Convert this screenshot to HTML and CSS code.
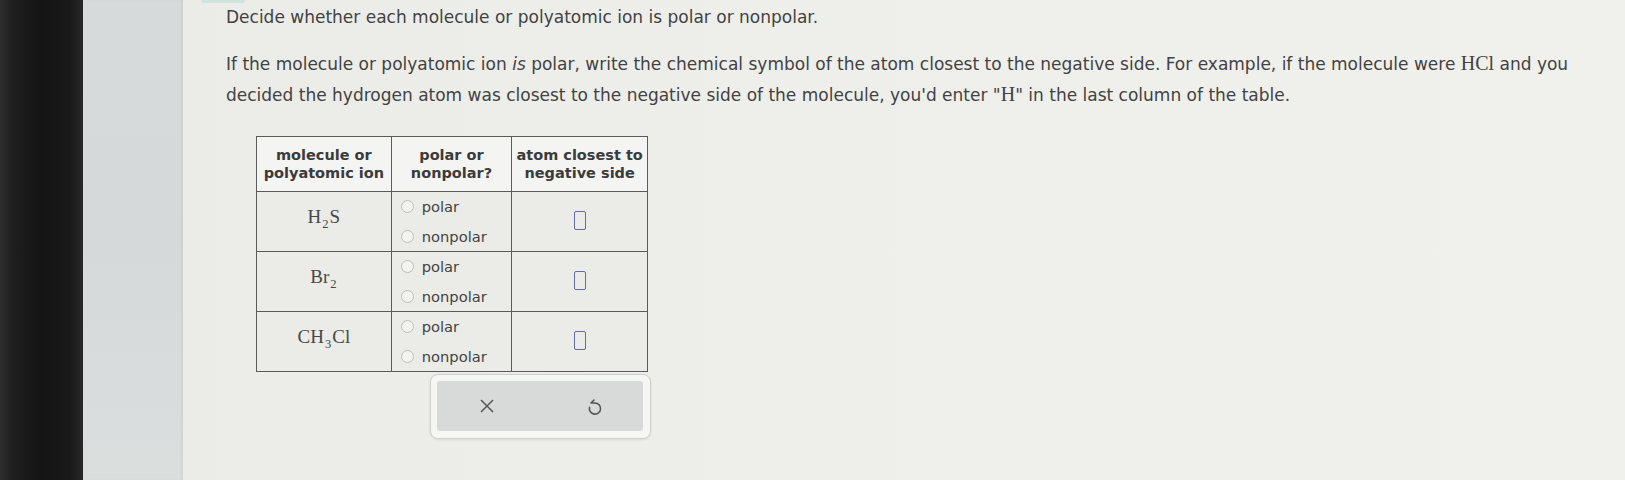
FILE: index.html
```html
<!DOCTYPE html>
<html>
<head>
<meta charset="utf-8">
<link rel="stylesheet" href="styles.css">
</head>
<body>
<div class="screen">
  <div class="bezel"></div>
  <div class="sidebar"></div>
  <div class="main">
    <div class="tab-hint"></div>
    <p class="intro">Decide whether each molecule or polyatomic ion is polar or nonpolar.</p>
    <p class="para">If the molecule or polyatomic ion <i>is</i> polar, write the chemical symbol of the atom closest to the negative side. For example, if the molecule were <span class="chem">HCl</span> and you<br>decided the hydrogen atom was closest to the negative side of the molecule, you'd enter "<span class="chem">H</span>" in the last column of the table.</p>
    <div class="work">
      <table class="grid">
        <thead>
          <tr>
            <th class="c1">molecule or<br>polyatomic ion</th>
            <th class="c2">polar or<br>nonpolar?</th>
            <th class="c3">atom closest to<br>negative side</th>
          </tr>
        </thead>
        <tbody>
          <tr>
            <td class="formula">H<sub>2</sub>S</td>
            <td class="choices">
              <label class="opt"><span class="radio"></span>polar</label>
              <label class="opt"><span class="radio"></span>nonpolar</label>
            </td>
            <td class="answer"><span class="box"></span></td>
          </tr>
          <tr>
            <td class="formula">Br<sub>2</sub></td>
            <td class="choices">
              <label class="opt"><span class="radio"></span>polar</label>
              <label class="opt"><span class="radio"></span>nonpolar</label>
            </td>
            <td class="answer"><span class="box"></span></td>
          </tr>
          <tr>
            <td class="formula">CH<sub>3</sub>Cl</td>
            <td class="choices">
              <label class="opt"><span class="radio"></span>polar</label>
              <label class="opt"><span class="radio"></span>nonpolar</label>
            </td>
            <td class="answer"><span class="box"></span></td>
          </tr>
        </tbody>
      </table>
      <div class="actions">
        <div class="action-inner">
          <button class="act" aria-label="clear">
            <svg width="16" height="16" viewBox="0 0 16 16"><path d="M2 2 L14 14 M14 2 L2 14" stroke="#555" stroke-width="1.5" fill="none"/></svg>
          </button>
          <button class="act" aria-label="undo">
            <svg width="18" height="20" viewBox="0 0 18 20"><path d="M6 7 L9 4 M6 7 L10 7 A5.6 5.6 0 1 1 4.5 11.4" stroke="#555" stroke-width="1.6" fill="none" stroke-linecap="round" stroke-linejoin="round"/></svg>
          </button>
        </div>
      </div>
    </div>
  </div>
</div>
</body>
</html>
```

FILE: styles.css
```css
html, body {
  margin: 0;
  padding: 0;
}
body {
  width: 1625px;
  height: 480px;
  overflow: hidden;
  background: #ecece9;
  font-family: "DejaVu Sans", Verdana, sans-serif;
  color: #424242;
}
.screen {
  display: flex;
  height: 480px;
}
.bezel {
  width: 83px;
  flex: none;
  background: linear-gradient(90deg, #2e2e2e 0px, #1e1e1e 14px, #141414 40px, #191919 70px, #282828 83px);
}
.sidebar {
  width: 100px;
  flex: none;
  background: linear-gradient(180deg, #d6dadb 0%, #d5d9da 50%, #dadedd 100%);
  box-shadow: inset -2px 0 2px rgba(0,0,0,0.04);
}
.main {
  flex: 1;
  position: relative;
  padding-left: 43px;
  background: linear-gradient(90deg, #ebebe8 0%, #eeeeeb 40%, #f0f0ed 100%);
}
.tab-hint {
  position: absolute;
  left: 18px;
  top: 0;
  width: 44px;
  height: 3px;
  background: #cfe3df;
  border-radius: 0 0 6px 6px;
}
.intro {
  margin: 7px 0 0 0;
  font-size: 17px;
  line-height: 21px;
}
.para {
  margin: 20px 0 0 0;
  font-size: 17px;
  line-height: 30px;
}
.chem {
  font-family: "Liberation Serif", "Times New Roman", serif;
  font-size: 20px;
}
.work {
  margin: 26px 0 0 30px;
  width: 392px;
  display: flex;
  flex-direction: column;
}
.grid {
  border-collapse: collapse;
  border: 1.5px solid #555;
}
.grid th, .grid td {
  border: 1.5px solid #5a5a5a;
  padding: 0;
}
.grid th {
  height: 54px;
  font-size: 14.5px;
  line-height: 18px;
  font-weight: bold;
  color: #3b3b3b;
  background: #f4f4f2;
  text-align: center;
  vertical-align: middle;
}
.c1 { width: 132px; }
.c2 { width: 118px; }
.c3 { width: 133px; }
.grid td {
  height: 56px;
  background: #ebebe8;
}
.formula {
  font-family: "Liberation Serif", "Times New Roman", serif;
  font-size: 19px;
  color: #484848;
  text-align: center;
  vertical-align: top;
  padding-top: 14px !important;
  box-sizing: border-box;
}
.formula sub {
  font-size: 12.5px;
  vertical-align: -5px;
  line-height: 0;
  margin: 0 1px;
}
.choices {
  vertical-align: top;
  padding: 0 0 0 9px !important;
}
.opt {
  display: flex;
  align-items: center;
  gap: 8px;
  height: 29.5px;
  font-size: 14.7px;
  color: #434343;
}
.radio {
  width: 11px;
  height: 11px;
  border: 1px solid #bdbdbb;
  border-radius: 50%;
  background: #f3f3f1;
}
.answer {
  text-align: center;
  vertical-align: middle;
}
.box {
  display: inline-block;
  width: 10px;
  height: 17px;
  border: 1.5px solid #6b6ba4;
  border-radius: 2px;
  vertical-align: middle;
  margin-top: -4px;
}
.actions {
  align-self: flex-end;
  margin: 2px -3px 0 0;
  width: 221px;
  height: 65px;
  box-sizing: border-box;
  padding: 6px 7px 7px 6px;
  background: #f6f6f4;
  border: 1.5px solid #cfcfcd;
  border-radius: 8px;
  box-shadow: 0 1px 3px rgba(0,0,0,0.08);
}
.action-inner {
  display: flex;
  height: 100%;
  background: #d8dad9;
  border-radius: 3px;
}
.act {
  flex: 1;
  display: flex;
  align-items: center;
  justify-content: center;
  border: none;
  background: transparent;
  padding: 0;
}
.act:first-child {
  padding-right: 8px;
}
```
